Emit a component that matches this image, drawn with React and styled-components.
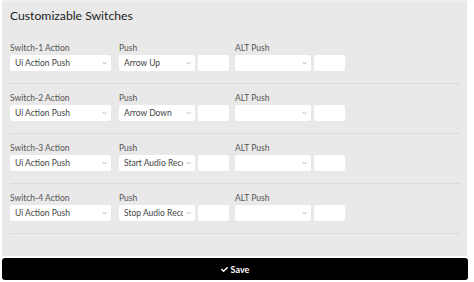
import React from "react";
import styled, { createGlobalStyle } from "styled-components";
import { FaCheck } from "react-icons/fa";

const Global = createGlobalStyle`
  html, body { margin: 0; padding: 0; background: #fff; }
  body { font-family: Lato, "Open Sans", sans-serif; }
  * { box-sizing: border-box; }
`;

const Page = styled.div`
  width: 474px;
  height: 282px;
  padding: 0 7px 2px 2px;
  display: flex;
  flex-direction: column;
  gap: 2px;
`;

const Panel = styled.div`
  flex: 1;
  background: #e9e9e9;
  border-top: 2px solid #efefef;
  padding: 6px 8px 0 8px;
  display: flex;
  flex-direction: column;
`;

const Title = styled.h2`
  margin: 0;
  font-size: 12.2px;
  line-height: 16px;
  font-weight: 400;
  color: #222;
`;

const Rows = styled.div`
  margin-top: 10px;
  display: flex;
  flex-direction: column;
`;

const Row = styled.div`
  display: flex;
  padding: 9px 0 12px 0;
  border-bottom: 1px solid #dadada;
  width: 450px;
`;

const Field = styled.div`
  display: flex;
  flex-direction: column;
  gap: 2px;
  width: ${(p) => p.$w}px;
`;

const Label = styled.div`
  font-size: 8.5px;
  line-height: 10px;
  color: #555;
  white-space: nowrap;
`;

const Controls = styled.div`
  display: flex;
  gap: 3px;
`;

const Select = styled.div`
  width: ${(p) => p.$w}px;
  height: 16px;
  background: #fff;
  border-radius: 2px;
  display: flex;
  align-items: center;
  padding: 0 4px 0 5px;
  gap: 3px;
`;

const SelectText = styled.span`
  flex: 1;
  overflow: hidden;
  white-space: nowrap;
  font-size: 8.5px;
  color: #444;
`;

const Chevron = styled.svg`
  flex: none;
  width: 5px;
  height: 4px;
`;

const Input = styled.div`
  width: 31px;
  height: 16px;
  background: #fff;
  border-radius: 2px;
`;

const SaveButton = styled.button`
  height: 22px;
  width: 466px;
  background: #000;
  border: none;
  border-radius: 3px;
  color: #fff;
  font-family: Lato, sans-serif;
  font-weight: 700;
  font-size: 9px;
  display: flex;
  align-items: center;
  justify-content: center;
  gap: 3px;
  padding: 0;
`;

function Dropdown({ w, value }) {
  return (
    <Select $w={w}>
      <SelectText>{value}</SelectText>
      <Chevron viewBox="0 0 5 4">
        <path d="M0.5 1 L2.5 3 L4.5 1" fill="none" stroke="#999" strokeWidth="0.7" />
      </Chevron>
    </Select>
  );
}

const rows = [
  { n: 1, push: "Arrow Up" },
  { n: 2, push: "Arrow Down" },
  { n: 3, push: "Start Audio Recording" },
  { n: 4, push: "Stop Audio Recording" },
];

export default function App() {
  return (
    <>
      <Global />
      <Page>
        <Panel>
          <Title>Customizable Switches</Title>
          <Rows>
            {rows.map((r) => (
              <Row key={r.n}>
                <Field $w={109}>
                  <Label>Switch-{r.n} Action</Label>
                  <Dropdown w={101} value="Ui Action Push" />
                </Field>
                <Field $w={116}>
                  <Label>Push</Label>
                  <Controls>
                    <Dropdown w={76} value={r.push} />
                    <Input />
                  </Controls>
                </Field>
                <Field $w={116}>
                  <Label>ALT Push</Label>
                  <Controls>
                    <Dropdown w={76} value="" />
                    <Input />
                  </Controls>
                </Field>
              </Row>
            ))}
          </Rows>
        </Panel>
        <SaveButton>
          <FaCheck size={7} />
          Save
        </SaveButton>
      </Page>
    </>
  );
}
